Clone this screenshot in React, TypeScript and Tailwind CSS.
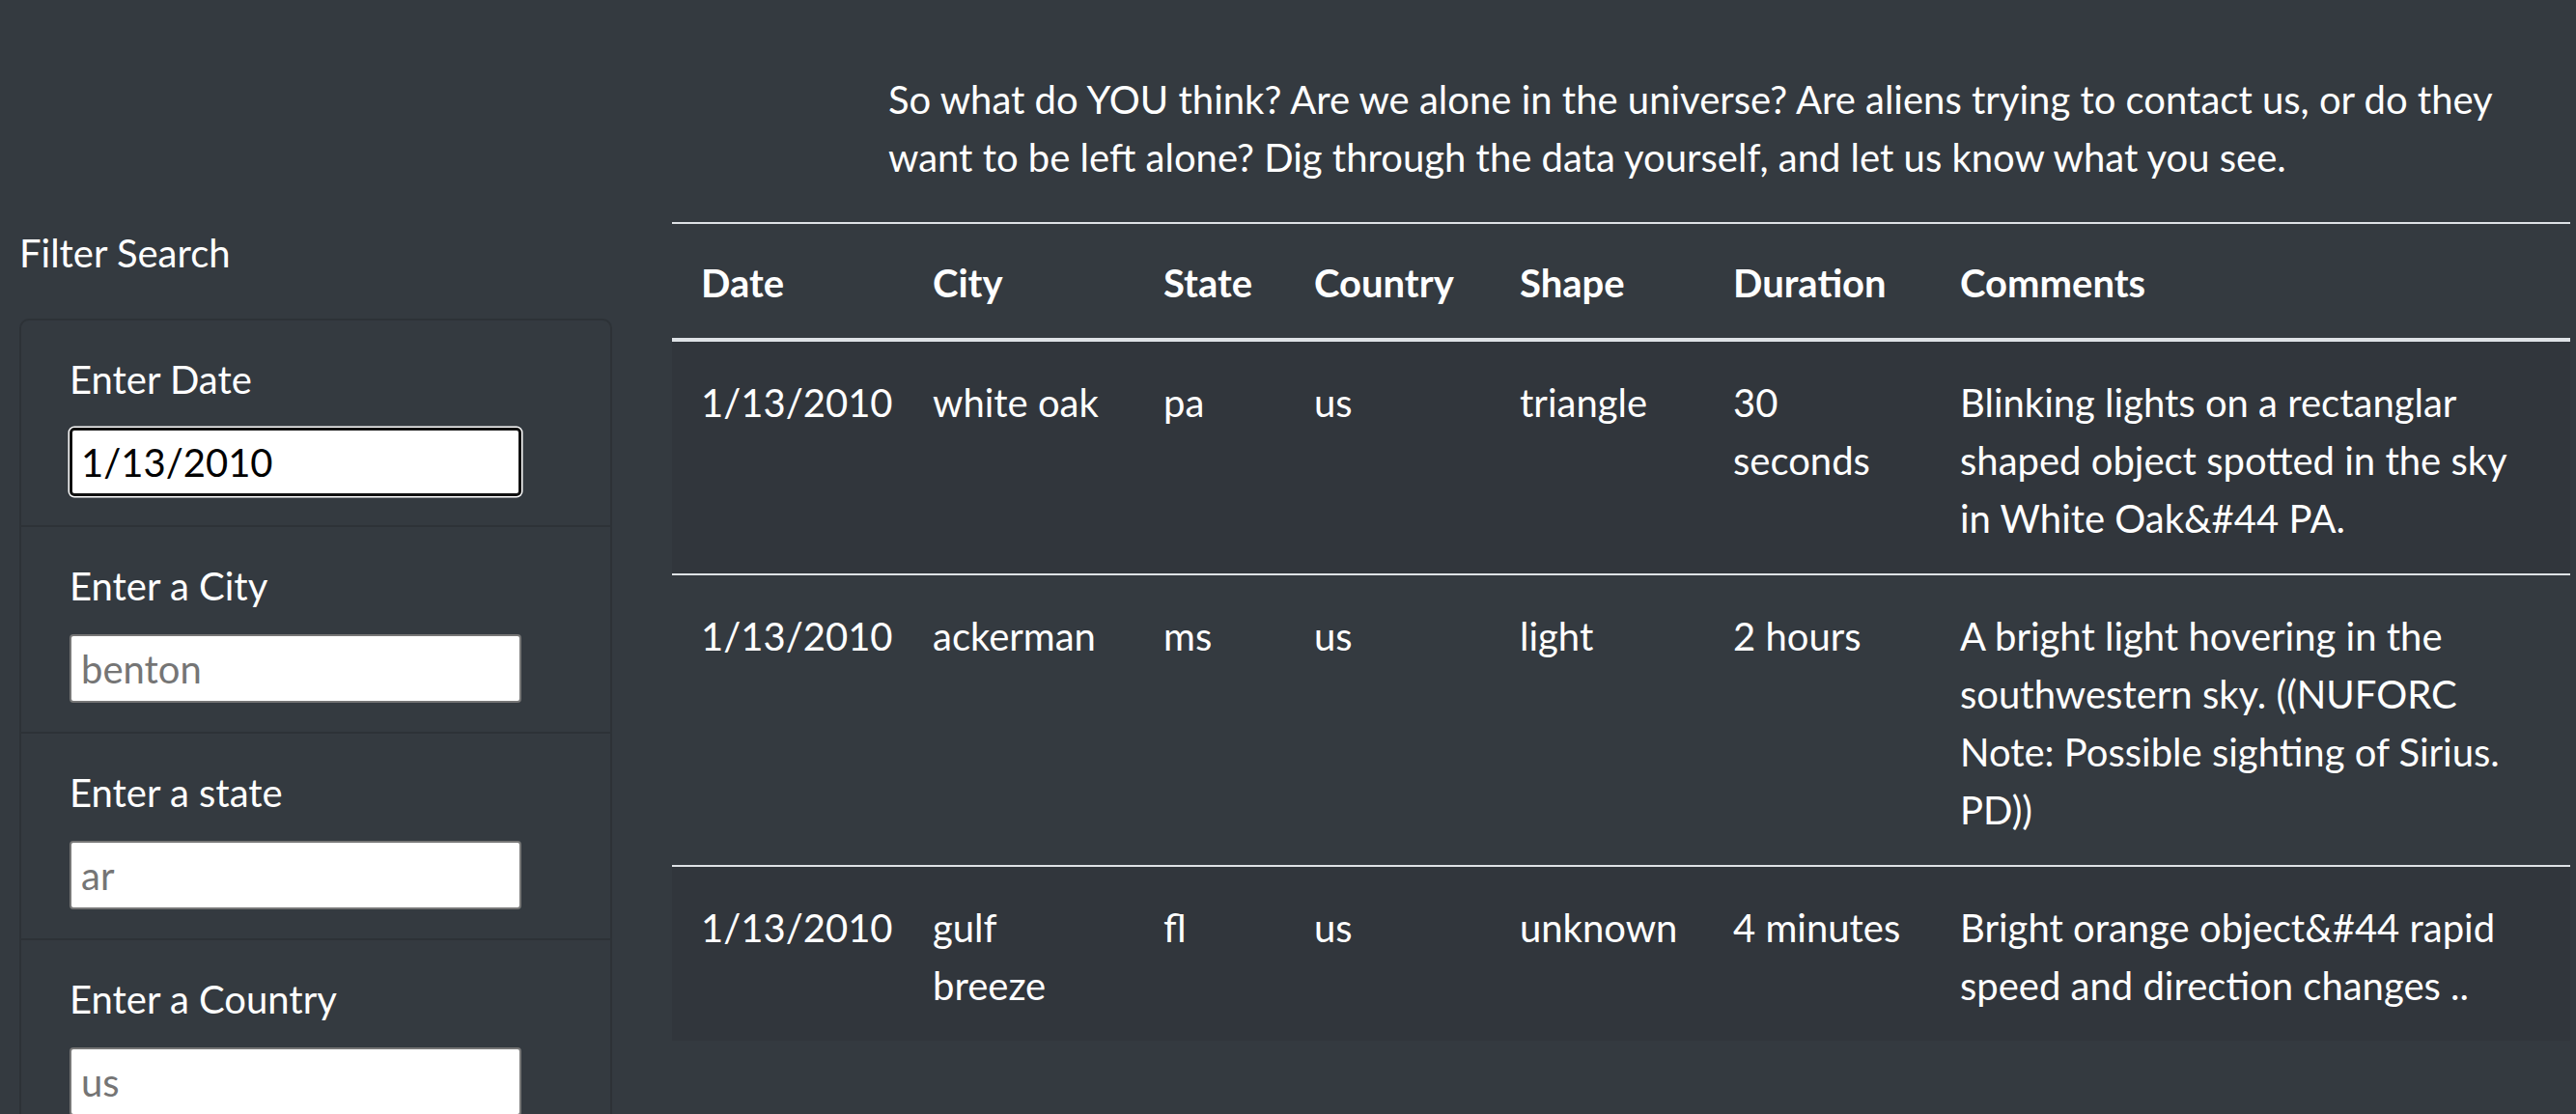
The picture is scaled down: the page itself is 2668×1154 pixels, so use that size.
import { useState } from 'react';

type Sighting = {
  datetime: string;
  city: string;
  state: string;
  country: string;
  shape: string;
  duration: string;
  comments: string;
};

const sightings: Sighting[] = [
  {
    datetime: '1/13/2010',
    city: 'white oak',
    state: 'pa',
    country: 'us',
    shape: 'triangle',
    duration: '30 seconds',
    comments: 'Blinking lights on a rectanglar shaped object spotted in the sky in White Oak&#44 PA.',
  },
  {
    datetime: '1/13/2010',
    city: 'ackerman',
    state: 'ms',
    country: 'us',
    shape: 'light',
    duration: '2 hours',
    comments: 'A bright light hovering in the southwestern sky. ((NUFORC Note: Possible sighting of Sirius. PD))',
  },
  {
    datetime: '1/13/2010',
    city: 'gulf breeze',
    state: 'fl',
    country: 'us',
    shape: 'unknown',
    duration: '4 minutes',
    comments: 'Bright orange object&#44 rapid speed and direction changes ..',
  },
];

const filters = [
  { id: 'datetime', label: 'Enter Date', placeholder: '1/13/2010' },
  { id: 'city', label: 'Enter a City', placeholder: 'benton' },
  { id: 'state', label: 'Enter a state', placeholder: 'ar' },
  { id: 'country', label: 'Enter a Country', placeholder: 'us' },
  { id: 'shape', label: 'Enter a Shape', placeholder: 'circle' },
];

const headers = ['Date', 'City', 'State', 'Country', 'Shape', 'Duration', 'Comments'];

export default function App() {
  const [date, setDate] = useState('1/13/2010');

  return (
    <div
      className="min-h-screen bg-[#343a40] text-white text-[40px] leading-[60px]"
      style={{ fontFamily: 'Lato, "Open Sans", sans-serif' }}
    >
      <div className="flex">
        {/* filters */}
        <aside className="ml-[20px] w-[614px] shrink-0 pt-[232px]">
          <p>Filter Search</p>
          <ul className="mt-[38px] rounded-[10px] border-2 border-[#2d3237] divide-y-2 divide-[#2d3237]">
            {filters.map((f) => (
              <li key={f.id} className="px-[50px] pt-[31px] pb-[30px]">
                <label htmlFor={f.id} className="block mb-[20px]">
                  {f.label}
                </label>
                {f.id === 'datetime' ? (
                  <input
                    id={f.id}
                    type="text"
                    value={date}
                    onChange={(e) => setDate(e.target.value)}
                    className="block w-[468px] h-[71px] px-[9px] bg-white text-black rounded-[5px] border-[3px] border-[#111] shadow-[0_0_0_1.5px_#fff] outline-none"
                  />
                ) : (
                  <input
                    id={f.id}
                    type="text"
                    placeholder={f.placeholder}
                    className="block w-[468px] h-[71px] px-[10px] bg-white text-black rounded-[4px] border-2 border-[#767676] placeholder:text-[#757575] outline-none"
                  />
                )}
              </li>
            ))}
          </ul>
        </aside>

        {/* data */}
        <main className="ml-[62px] w-[1966px] shrink-0 pt-[73px]">
          <p className="ml-[224px] whitespace-nowrap">
            So what do YOU think? Are we alone in the universe? Are aliens trying to contact us, or do they
            <br />
            want to be left alone? Dig through the data yourself, and let us know what you see.
          </p>
          <table className="mt-[37px] w-full table-fixed border-collapse text-left">
            <colgroup>
              <col className="w-[240px]" />
              <col className="w-[239px]" />
              <col className="w-[156px]" />
              <col className="w-[213px]" />
              <col className="w-[221px]" />
              <col className="w-[235px]" />
              <col />
            </colgroup>
            <thead>
              <tr>
                {headers.map((h) => (
                  <th
                    key={h}
                    className="px-[30px] pt-[31px] pb-[27px] font-bold align-bottom border-t-2 border-b-4 border-[#dee2e6]"
                  >
                    {h}
                  </th>
                ))}
              </tr>
            </thead>
            <tbody>
              {sightings.map((s, i) => (
                <tr key={i} className={i % 2 === 0 ? 'bg-[#31363c]' : ''}>
                  {[s.datetime, s.city, s.state, s.country, s.shape, s.duration, s.comments].map((v, j) => (
                    <td
                      key={j}
                      className={`px-[30px] pt-[33px] pb-[27px] align-top ${i > 0 ? 'border-t-2 border-[#dee2e6]' : ''}`}
                    >
                      {v}
                    </td>
                  ))}
                </tr>
              ))}
            </tbody>
          </table>
        </main>
      </div>
    </div>
  );
}
